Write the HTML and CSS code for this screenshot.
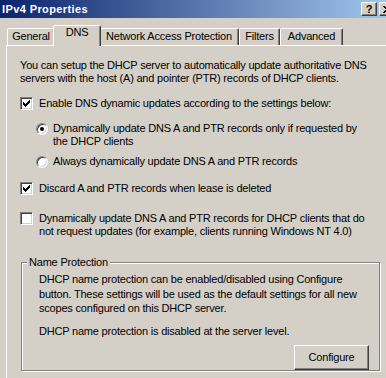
FILE: index.html
```html
<!DOCTYPE html>
<html lang="en">
<head>
    <title>IPv4 Properties</title>
    <link rel="stylesheet" href="styles.css">
</head>
<body>
    <div class="window">
        <div class="titlebar">
            <span class="title">IPv4 Properties</span>
            <span class="cap-btn help">?</span>
            <span class="cap-btn close">
                <svg width="8" height="7" viewBox="0 0 8 7" shape-rendering="crispEdges">
                    <path d="M0 0H2V1H3V2H5V1H6V0H8V1H7V2H6V3H5V4H6V5H7V6H8V7H6V6H5V5H3V6H2V7H0V6H1V5H2V4H3V3H2V2H1V1H0Z" fill="#000"/>
                </svg>
            </span>
        </div>

        <div class="tabs">
            <div class="tab tab-general">General</div>
            <div class="tab tab-dns active">DNS</div>
            <div class="tab tab-nap">Network Access Protection</div>
            <div class="tab tab-filters">Filters</div>
            <div class="tab tab-advanced">Advanced</div>
        </div>

        <div class="panel">
            <p class="intro">You can setup the DHCP server to automatically update authoritative DNS<br>servers with the host (A) and pointer (PTR) records of DHCP clients.</p>

            <div class="option opt-enable">
                <span class="checkbox"><svg width="7" height="7" viewBox="0 0 7 7" shape-rendering="crispEdges"><path d="M0 2H1V3H2V4H3V3H4V2H5V1H6V0H7V3H6V4H5V5H4V6H3V7H2V6H1V5H0Z" fill="#000"/></svg></span>
                <span>Enable DNS dynamic updates according to the settings below:</span>
            </div>

            <div class="option radio-row opt-requested">
                <span class="radio"><span class="dot"></span></span>
                <span>Dynamically update DNS A and PTR records only if requested by<br>the DHCP clients</span>
            </div>

            <div class="option radio-row opt-always">
                <span class="radio"></span>
                <span>Always dynamically update DNS A and PTR records</span>
            </div>

            <div class="option opt-discard">
                <span class="checkbox"><svg width="7" height="7" viewBox="0 0 7 7" shape-rendering="crispEdges"><path d="M0 2H1V3H2V4H3V3H4V2H5V1H6V0H7V3H6V4H5V5H4V6H3V7H2V6H1V5H0Z" fill="#000"/></svg></span>
                <span>Discard A and PTR records when lease is deleted</span>
            </div>

            <div class="option opt-legacy">
                <span class="checkbox"></span>
                <span>Dynamically update DNS A and PTR records for DHCP clients that do<br>not request updates (for example, clients running Windows NT 4.0)</span>
            </div>

            <fieldset class="group">
                <legend>Name Protection</legend>
                <p class="group-text">DHCP name protection can be enabled/disabled using Configure<br>button. These settings will be used as the default settings for all new<br>scopes configured on this DHCP server.</p>
                <p class="group-status">DHCP name protection is disabled at the server level.</p>
                <div class="group-actions">
                    <button class="btn">Configure</button>
                </div>
            </fieldset>
        </div>
    </div>
</body>
</html>
```

FILE: styles.css
```css
body {
    margin: 0;
    background: #d4d0c8;
    color: #000;
    font-family: "Liberation Sans", Arial, sans-serif;
    font-size: 11px;
    line-height: 13px;
    letter-spacing: -0.2px;
    overflow: hidden;
}

.window {
    width: 397px;
    height: 378px;
}

/* title bar */
.titlebar {
    height: 18px;
    display: flex;
    align-items: center;
    background: linear-gradient(to right, #0a246a, #a6caf0);
}

.title {
    color: #fff;
    font-weight: bold;
    letter-spacing: 0.4px;
    padding-left: 2px;
}

.cap-btn {
    width: 16px;
    height: 14px;
    box-sizing: border-box;
    display: flex;
    align-items: center;
    justify-content: center;
    background: #d4d0c8;
    border: 1px solid;
    border-color: #fff #404040 #404040 #fff;
    box-shadow: inset -1px -1px #808080;
    font-weight: bold;
    letter-spacing: 0;
}

.help {
    margin-left: auto;
}

.close {
    margin: 0 2px;
}

/* tabs */
.tabs {
    display: flex;
    align-items: flex-end;
    height: 20px;
    margin-top: 7px;
    padding-left: 7px;
}

.tab {
    height: 17px;
    box-sizing: border-box;
    padding-top: 1px;
    background: #d4d0c8;
    border: 1px solid;
    border-bottom: none;
    border-color: #fff #404040 transparent #fff;
    border-radius: 2px 2px 0 0;
    box-shadow: inset -1px 0 #808080;
    text-align: center;
}

.tab.active {
    height: 21px;
    padding-top: 0;
    margin: 0 -2px -1px;
    z-index: 1;
}

.tab-general { width: 48px; }
.tab-dns { width: 48px; }
.tab-nap { width: 140px; }
.tab-filters { width: 41px; }
.tab-advanced { width: 63px; }

/* page */
.panel {
    margin-left: 6px;
    padding: 13px 0 0 13px;
    border-top: 1px solid #fff;
    border-left: 1px solid #fff;
    height: 320px;
}

.intro {
    margin: 0;
}

.option {
    display: flex;
    align-items: flex-start;
}

.radio-row {
    padding-left: 16px;
}

.opt-enable { margin-top: 12px; }
.opt-requested { margin-top: 12px; }
.opt-always { margin-top: 7px; }
.opt-discard { margin-top: 14px; }
.opt-legacy { margin-top: 17px; }

.checkbox {
    flex: none;
    width: 13px;
    height: 13px;
    box-sizing: border-box;
    margin-right: 6px;
    padding: 2px 0 0 2px;
    background: #fff;
    border: 1px solid;
    border-color: #808080 #fff #fff #808080;
    box-shadow: inset 1px 1px #404040, inset -1px -1px #d4d0c8;
}

.checkbox svg {
    display: block;
}

.radio {
    flex: none;
    width: 12px;
    height: 12px;
    box-sizing: border-box;
    margin: 1px 5px 0 0;
    display: flex;
    align-items: center;
    justify-content: center;
    background: #fff;
    border: 1px solid;
    border-color: #808080 #fff #fff #808080;
    border-radius: 50%;
    box-shadow: inset 1px 1px #404040, inset -1px -1px #d4d0c8;
}

.dot {
    width: 4px;
    height: 4px;
    border-radius: 50%;
    background: #000;
}

/* name protection group */
.group {
    width: 359px;
    box-sizing: border-box;
    min-width: 0;
    margin: 18px 0 0 1px;
    padding: 3px 10px 0 17px;
    border: 1px solid #808080;
    box-shadow: 1px 1px 0 #fff, inset 1px 1px 0 #fff;
}

.group legend {
    padding: 0 2px;
    margin-left: -12px;
    background: #d4d0c8;
}

.group-text {
    margin: 0;
    line-height: 14.5px;
}

.group-status {
    margin: 9px 0 0;
}

.group-actions {
    display: flex;
    justify-content: flex-end;
    margin-top: 7.5px;
}

.btn {
    width: 75px;
    height: 25px;
    padding: 0;
    font: inherit;
    letter-spacing: inherit;
    color: #000;
    background: #d4d0c8;
    border: 1px solid;
    border-color: #fff #404040 #404040 #fff;
    box-shadow: inset -1px -1px #808080;
}
```
